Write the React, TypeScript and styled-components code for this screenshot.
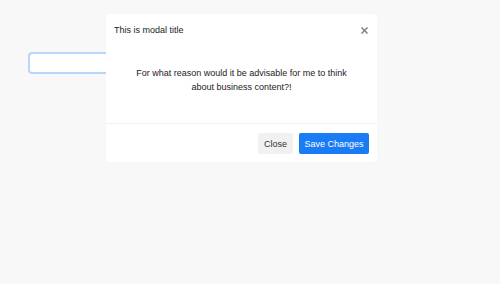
import React from "react";
import styled, { createGlobalStyle } from "styled-components";

const GlobalStyle = createGlobalStyle`
  html, body {
    margin: 0;
    padding: 0;
    background: #f8f8f8;
    font-family: "Liberation Sans", Arial, sans-serif;
  }
`;

const Page = styled.div`
  position: relative;
  width: 500px;
  height: 284px;
  padding: 52px 0 0 28px;
  box-sizing: border-box;
`;

const Input = styled.input`
  display: block;
  width: 160px;
  height: 22px;
  box-sizing: border-box;
  border: 2px solid #b8d6fb;
  border-radius: 4px;
  background: #fff;
  outline: none;
`;

const Modal = styled.div`
  position: absolute;
  left: 106px;
  top: 14px;
  width: 271px;
  background: #fff;
  border-radius: 4px;
  display: flex;
  flex-direction: column;
`;

const Header = styled.div`
  display: flex;
  align-items: center;
  justify-content: space-between;
  height: 29px;
  padding: 1px 8px 0;
`;

const Title = styled.div`
  font-size: 9px;
  color: #222;
`;

const CloseIcon = styled.button`
  border: none;
  background: none;
  padding: 0;
  width: 10px;
  height: 10px;
  margin-top: 1px;
  display: flex;
  align-items: center;
  justify-content: center;
`;

const Body = styled.div`
  padding: 22px 20px 29px;
  text-align: center;
  font-size: 9px;
  line-height: 14px;
  color: #222;
  border-bottom: 1px solid #f0f0f0;
`;

const Footer = styled.div`
  display: flex;
  justify-content: flex-end;
  gap: 6px;
  padding: 9px 8px 8px;
`;

const Button = styled.button<{ primary?: boolean }>`
  height: 21px;
  border: none;
  border-radius: 2px;
  padding: 0 ${p => (p.primary ? "5.5px" : "6px")};
  font-family: "Liberation Sans", Arial, sans-serif;
  font-size: 9px;
  color: ${p => (p.primary ? "#fff" : "#333")};
  background: ${p => (p.primary ? "#1a7cf5" : "#f1f1f1")};
`;

const App: React.FC = () => {
  return (
    <>
      <GlobalStyle />
      <Page>
        <Input />
        <Modal>
          <Header>
            <Title>This is modal title</Title>
            <CloseIcon>
              <svg width="7" height="7" viewBox="0 0 7 7">
                <path
                  d="M1 1L6 6M6 1L1 6"
                  stroke="#808080"
                  strokeWidth="1.5"
                  strokeLinecap="square"
                />
              </svg>
            </CloseIcon>
          </Header>
          <Body>
            For what reason would it be advisable for me to think
            <br />
            about business content?!
          </Body>
          <Footer>
            <Button>Close</Button>
            <Button primary>Save Changes</Button>
          </Footer>
        </Modal>
      </Page>
    </>
  );
};

export default App;
